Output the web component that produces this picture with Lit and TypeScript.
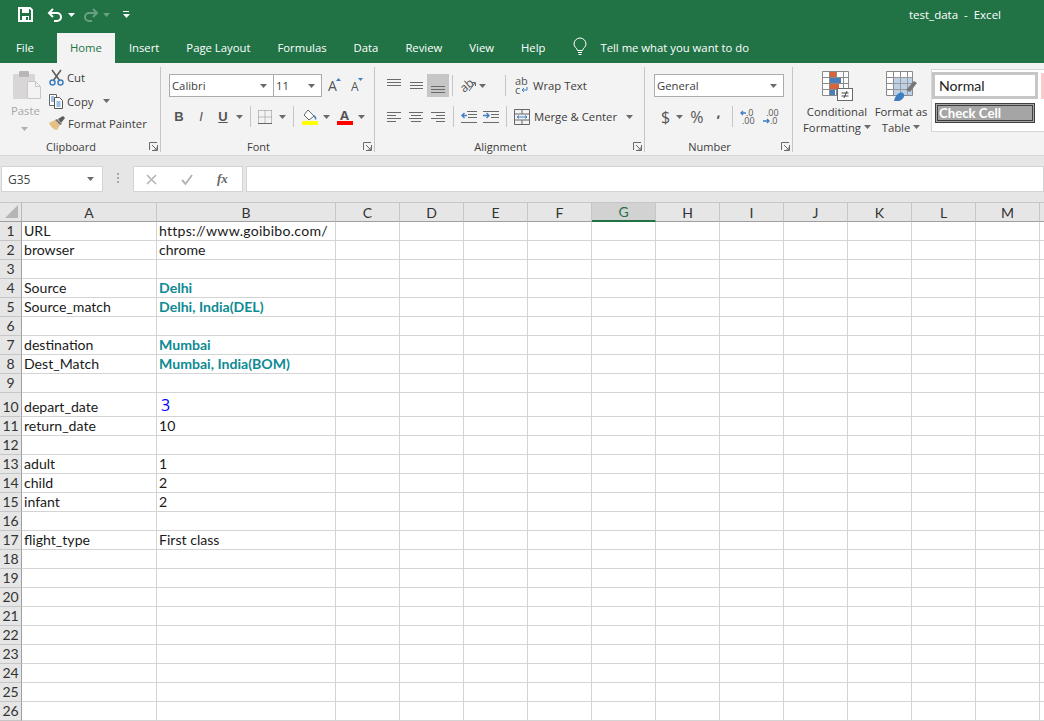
import { LitElement, html, css, svg } from "lit";
import { customElement } from "lit/decorators.js";

const ic = (w: number, h: number, body: unknown, cls = "") =>
  html`<svg class="ic ${cls}" width=${w} height=${h} viewBox="0 0 ${w} ${h}">${body}</svg>`;
const caret = (c = "#6a6a6a") => html`<svg class="ic" width="7" height="4" viewBox="0 0 7 4"><path d="M0 0h7L3.5 4z" fill=${c}/></svg>`;
const launcher = html`<svg class="ic launcher" width="9" height="9" viewBox="0 0 9 9"><path d="M.5 8V.5H8M8.5 3v5.5H3M3 3l4.5 4.5M5 8h3V5" fill="none" stroke="#6a6a6a"/></svg>`;

const lines = (rows: [number, number, number][], c = "#6a6a6a") =>
  rows.map(([x, y, w]) => svg`<rect x=${x} y=${y} width=${w} height="1" fill=${c}/>`);

const save = ic(15, 15, svg`<path d="M1 1h11l2 2v11H1z" fill="none" stroke="#fff" stroke-width="2"/><rect x="4" y="1" width="7" height="5" fill="#fff"/><rect x="4" y="9" width="7" height="5" fill="#fff"/><rect x="8" y="10" width="2" height="3" fill="#217346"/>`);
const undo = (c: string, flip = false) => ic(16, 14, svg`<g transform=${flip ? "translate(16 0) scale(-1 1)" : ""}><path d="M2 5h8a4 4 0 0 1 0 8H7" fill="none" stroke=${c} stroke-width="2"/><path d="M6 1L2 5l4 4" fill="none" stroke=${c} stroke-width="2"/></g>`);
const bulb = ic(14, 18, svg`<path d="M4.5 12.5C4 10 1 9 1 6a6 6 0 0 1 12 0c0 3-3 4-3.5 6.5z" fill="none" stroke="#fff"/><path d="M5 14.5h4M5.5 16.5h3" stroke="#fff"/>`);

const paste = ic(28, 30, svg`<rect x="0" y="3" width="22" height="25" rx="1" fill="#d9d6d7"/><rect x="6" y="0" width="10" height="6" rx="1" fill="#b9b6b7"/><path d="M14.5 10.5h8l5 5v12h-13z" fill="#f4f2f3" stroke="#c8c6c7"/><path d="M22.5 10.5v5h5" fill="none" stroke="#c8c6c7"/>`);
const scissors = ic(15, 17, svg`<path d="M3 1l8 11M12 1L4 12" stroke="#5d5d5d" stroke-width="1.6"/><circle cx="3.5" cy="13.5" r="2.5" fill="none" stroke="#3f7fc1" stroke-width="1.5"/><circle cx="11.5" cy="13.5" r="2.5" fill="none" stroke="#3f7fc1" stroke-width="1.5"/>`);
const copy = ic(15, 15, svg`<path d="M.5.5h7v11h-7z" fill="#fff" stroke="#666"/><path d="M5.5 3.5h5l3 3v8h-8z" fill="#fff" stroke="#555"/><path d="M2 3h3M2 5h3M2 7h3M7.5 8h4M7.5 10h4M7.5 12h4" stroke="#3f7fc1"/>`);
const painter = ic(16, 14, svg`<path d="M0 7l6-3 5 5-3 5C5 14 2 11 0 7z" fill="#e5c184"/><path d="M6 4l2-1 5 5-2 1z" fill="#777"/><path d="M9 3l5-3 2 2-4 5z" fill="#5b5b5b"/>`);
const growA = ic(16, 15, svg`<text x="0" y="13" class="glyph" font-size="14">A</text><path d="M8 3l2.5-3L13 3z" fill="#3f7fc1"/>`);
const shrinkA = ic(13, 15, svg`<text x="0" y="13" class="glyph" font-size="12">A</text><path d="M7 0h5L9.5 3z" fill="#3f7fc1"/>`);
const borders = ic(14, 14, svg`<path d="M.5.5h13M.5 7h13M.5.5v13M7 .5v13M13.5.5v13" fill="none" stroke="#8a8a8a" stroke-dasharray="1 1"/><path d="M0 13.5h14" stroke="#666"/>`);
const fill = ic(16, 16, svg`<path d="M6 1l6 6-5 4-5-5z" fill="#fff" stroke="#666"/><path d="M12 6c2 1 3 3 2 5-1-1-2-2-2-5z" fill="#3f7fc1"/><rect x="0" y="12" width="16" height="4" fill="#ffff00"/>`);
const fontA = ic(16, 16, svg`<text x="3" y="11" class="glyph" font-size="13" font-weight="700">A</text><rect x="0" y="12" width="16" height="4" fill="#ff0000"/>`);

const al = (rows: [number, number, number][]) => ic(14, 14, lines(rows));
const alTop = al([[0, 0, 14], [0, 3, 14], [0, 6, 14]]);
const alMid = al([[1, 3, 13], [1, 6, 13], [1, 9, 13]]);
const alBot = al([[0, 7, 14], [0, 10, 14], [0, 13, 14]]);
const alLeft = al([[0, 2, 14], [0, 5, 9], [0, 8, 14], [0, 11, 9]]);
const alCen = al([[0, 2, 14], [2, 5, 10], [0, 8, 14], [2, 11, 10]]);
const alRight = al([[0, 2, 14], [5, 5, 9], [0, 8, 14], [5, 11, 9]]);
const orient = ic(17, 15, svg`<text x="0" y="12" class="glyph" font-size="12" transform="rotate(-40 6 8)">ab</text><path d="M9 13l6-8M12 4.5h3.5V8" fill="none" stroke="#666"/>`);
const indL = ic(16, 14, svg`${lines([[6, 1, 10], [7, 4, 9], [7, 7, 9], [0, 12, 16]])}<path d="M6 5.5H1M3.5 3L1 5.5 3.5 8" fill="none" stroke="#3f7fc1" stroke-width="1.4"/>`);
const indR = ic(16, 14, svg`${lines([[0, 1, 16], [8, 4, 8], [8, 7, 8], [0, 12, 16]])}<path d="M0 5.5h6M3.5 3L6 5.5 3.5 8" fill="none" stroke="#3f7fc1" stroke-width="1.4"/>`);
const wrap = ic(13, 17, svg`<text x="0" y="8" class="glyph" font-size="11">ab</text><text x="0" y="17" class="glyph" font-size="11">c</text><path d="M12 10v3H7M9 11l-2 2 2 2" fill="none" stroke="#3f7fc1"/>`);
const merge = ic(16, 16, svg`<path d="M.5.5h15v15H.5zM.5 5h15M.5 11h15M8 .5V5M8 11v4.5" fill="none" stroke="#666"/><path d="M3 8h10M5 6.5L3 8l2 1.5M11 6.5L13 8l-2 1.5" fill="none" stroke="#3f7fc1"/>`);
const incDec = ic(15, 15, svg`<text x="6" y="7" class="glyph" font-size="9">.0</text><text x="2" y="15" class="glyph" font-size="9">.00</text><path d="M6 4H1M3 2L1 4l2 2" fill="none" stroke="#3f7fc1" stroke-width="1.3"/>`);
const decDec = ic(15, 15, svg`<text x="3" y="7" class="glyph" font-size="9">.00</text><text x="7" y="15" class="glyph" font-size="9">.0</text><path d="M0 12h6M4 10l2 2-2 2" fill="none" stroke="#3f7fc1" stroke-width="1.3"/>`);

const tableGrid = svg`<path d="M.5.5h26v24H.5zM.5 6.5h26M.5 12.5h26M.5 18.5h26M7.5.5v24M14.5.5v24M21.5.5v24" fill="#fff" stroke="#8a8a8a"/>`;
const condFmt = ic(31, 30, svg`${tableGrid}<rect x="8" y="1" width="6" height="5" fill="#d9643a"/><rect x="8" y="7" width="11" height="5" fill="#4a7ebb"/><rect x="8" y="13" width="9" height="5" fill="#d9643a"/><rect x="8" y="19" width="5" height="5" fill="#4a7ebb"/><rect x="15.5" y="17.5" width="15" height="12" fill="#fff" stroke="#6a6a6a"/><path d="M19.5 22h7M19.5 25h7M25 20l-3 7" stroke="#444" fill="none"/>`);
const fmtTable = ic(31, 30, svg`${tableGrid}<rect x="8" y="7" width="18" height="17" fill="#bcd0e6"/><path d="M7.5 6.5h19M7.5 12.5h19M7.5 18.5h19M14.5 6.5v18M21.5 6.5v18" stroke="#9a9a9a" fill="none"/><path d="M20 19l8-9 3 2-7 9z" fill="#777"/><path d="M8 30c1-5 5-10 9-8 3 2 0 7-4 8z" fill="#3f7fc1"/>`);

const COLS = [
  ["A", 135], ["B", 179], ["C", 64], ["D", 64], ["E", 64], ["F", 64], ["G", 64],
  ["H", 64], ["I", 64], ["J", 64], ["K", 64], ["L", 64], ["M", 64], ["", 64],
] as const;

type Cell = [string, string?, string?];
const DATA: Record<number, Cell> = {
  1: ["URL", "https://www.goibibo.com/", "url"],
  2: ["browser", "chrome"],
  4: ["Source", "Delhi", "teal"],
  5: ["Source_match", "Delhi, India(DEL)", "teal"],
  7: ["destination", "Mumbai", "teal"],
  8: ["Dest_Match", "Mumbai, India(BOM)", "teal"],
  10: ["depart_date", "3", "blue"],
  11: ["return_date", "10"],
  13: ["adult", "1"],
  14: ["child", "2"],
  15: ["infant", "2"],
  17: ["flight_type", "First class"],
};

@customElement("app-root")
export class AppRoot extends LitElement {
  static styles = css`
    :host { display: block; width: 1044px; height: 721px; overflow: hidden; background: #fff;
      font-family: "Open Sans", "Liberation Sans", sans-serif; font-size: 11.3px; color: #333; }
    .ic { display: block; flex: none; overflow: visible; }
    .glyph { font-family: "Open Sans", sans-serif; fill: #555; }

    .titlebar { height: 33px; background: #217346; display: flex; align-items: center; color: #fff; box-sizing: border-box; padding: 0 0 4px 18px; }
    .qat { display: flex; align-items: center; }
    .undo { margin-left: 14px; }
    .c1 { margin-left: 5px; }
    .redo { margin-left: 8px; opacity: .32; }
    .c2 { margin-left: 4px; opacity: .32; }
    .cust { margin-left: 13px; display: flex; flex-direction: column; gap: 2px; }
    .cust i { display: block; width: 6px; height: 1px; background: #fff; }
    .title { margin-left: auto; margin-right: 43px; white-space: pre; font-size: 11.5px; }

    .tabs { height: 30px; background: #217346; display: flex; color: #fff; }
    .tab { display: flex; align-items: center; padding-bottom: 2px; box-sizing: border-box; }
    .tab.file { margin-left: 16px; margin-right: 23px; }
    .tab.home { width: 58px; justify-content: center; background: #f3f3f3; color: #217346; margin-right: 14px; }
    .tab.g { margin-right: 27px; }
    .tell { display: flex; align-items: center; gap: 13px; margin-left: 1px; }

    .ribbon { height: 92px; background: #f3f3f3; border-bottom: 1px solid #d6d6d6; display: flex; color: #3c3c3c; }
    .group { position: relative; box-sizing: border-box; display: flex; flex-direction: column; height: 85px; margin-top: 4px; border-right: 1px solid #c6c6c6; flex: none; }
    .gbody { flex: 1; display: flex; min-height: 0; }
    .glabel { height: 10px; line-height: 10px; padding-right: 18px; text-align: center; font-size: 11px; position: relative; }
    .launcher { position: absolute; right: 2px; top: 0; }

    .clip { width: 161px; }
    .pastecol { width: 49px; padding: 4px 0 0 13px; box-sizing: border-box; color: #a8a8a8; }
    .pastecol .lbl { margin: 2px 0 0 -2px; }
    .pastecol .ic:last-child { margin: 9px 0 0 8px; }
    .cliprows { padding-top: 1px; display: flex; flex-direction: column; gap: 6px; }
    .crow { display: flex; align-items: center; height: 18px; gap: 3px; white-space: nowrap; }
    .crow.last { margin-top: -2px; }
    .crow .c { margin-left: 7px; }

    .font { width: 214px; }
    .font .gbody { padding-left: 8px; }
    .stack { display: flex; flex-direction: column; gap: 8px; padding-top: 7px; }
    .row { display: flex; align-items: center; height: 23px; }
    .combo { height: 23px; box-sizing: border-box; background: #fff; border: 1px solid #ababab; display: flex; align-items: center; justify-content: space-between; padding: 0 6px 0 2px; }
    .bi { font-family: "Liberation Sans", sans-serif; font-size: 13px; color: #555; width: 14px; text-align: center; }
    .vs { width: 1px; height: 21px; background: #c6c6c6; flex: none; }

    .align { width: 270px; }
    .align .gbody { padding-left: 12px; }
    .hl { width: 22px; height: 23px; background: #c6c6c6; display: flex; align-items: center; justify-content: center; margin-left: 4px; }
    .alsm { white-space: nowrap; }

    .num { width: 148px; }
    .num .gbody { padding-left: 9px; }
    .big { font-size: 16px; color: #555; }
    .comma { font-weight: 700; font-size: 14px; color: #555; transform: translateY(-5px); }

    .styles { flex: 1; display: flex; margin-top: 4px; height: 85px; }
    .cmd { display: flex; flex-direction: column; align-items: center; flex: none; padding-top: 4px; line-height: 16px; white-space: nowrap; }
    .cmd .ic:first-child { margin-bottom: 3px; }
    .cmd span { display: flex; align-items: center; gap: 3px; }
    .gallery { background: #fff; width: 120px; height: 63px; box-sizing: border-box; margin: 2px 0 0 5px; border: 1px solid #d6d6d6; padding: 2px 0 0 0; flex: none; display: flex; flex-direction: column; gap: 4px; position: relative; overflow: hidden; }
    .normal { width: 106px; height: 27px; box-sizing: border-box; border: 3px solid #c6c6c6; background: #fff; color: #222; display: flex; align-items: center; padding-left: 4px; font-family: "Lato", sans-serif; font-size: 14.1px; }
    .pink { position: absolute; left: 109px; top: 3px; width: 10px; height: 26px; background: #ffc7ce; }
    .check { width: 100px; height: 20px; box-sizing: border-box; margin-left: 3px; background: #a5a5a5; border: 3px double #3f3f3f; color: #fff; font-family: "Lato", sans-serif; font-weight: 700; font-size: 13.2px; display: flex; align-items: center; padding-left: 1px; }

    .fbar { height: 46px; background: #e6e6e6; box-sizing: border-box; padding: 10px 0 0 1px; display: flex; align-items: flex-start; }
    .box { height: 26px; background: #fff; border: 1px solid #d4d4d4; box-sizing: border-box; display: flex; align-items: center; }
    .name { width: 102px; padding: 0 8px 0 6px; justify-content: space-between; font-size: 12px; color: #444; }
    .dots { width: 30px; display: flex; flex-direction: column; align-items: center; gap: 2px; padding-top: 7px; }
    .dots i { width: 2px; height: 2px; background: #a8a8a8; }
    .fxbox { width: 110px; justify-content: flex-start; gap: 24px; padding-left: 12px; }
    .fx { font-family: "Liberation Serif", serif; font-style: italic; font-weight: 700; font-size: 13px; color: #666; }
    .input { flex: 1; margin-left: 3px; }

    .sheet { display: grid; font-family: "Lato", sans-serif; font-size: 14.1px; color: #1a1a1a; }
    .corner { background: #e6e6e6; border-bottom: 1px solid #9f9f9f; border-right: 1px solid #b9b9b9; box-sizing: border-box; position: relative; border-top: 1px solid #c6c6c6; }
    .corner svg { position: absolute; right: 3px; bottom: 3px; }
    .ch { background: #e6e6e6; border-top: 1px solid #c6c6c6; border-bottom: 1px solid #9f9f9f; border-right: 1px solid #c6c6c6; box-sizing: border-box; display: flex; align-items: center; justify-content: center; color: #333; font-size: 14px; }
    .ch.sel { background: #d2d2d2; border-bottom: 2px solid #217346; color: #217346; }
    .rh { background: #e6e6e6; border-bottom: 1px solid #c6c6c6; border-right: 1px solid #9f9f9f; box-sizing: border-box; display: flex; align-items: flex-end; justify-content: center; line-height: 18px; color: #333; font-size: 14px; }
    .cell { border-right: 1px solid #d4d4d4; border-bottom: 1px solid #d4d4d4; box-sizing: border-box; display: flex; align-items: flex-end; padding-left: 2px; line-height: 18px; white-space: nowrap; min-width: 0; }
    .teal { color: #0e8a92; font-weight: 700; }
    .url { letter-spacing: .25px; }
    .blue { color: #0000ff; font-size: 16px; padding-left: 2px; line-height: 22px; font-family: "Open Sans", sans-serif; }
  `;

  private sheet() {
    const rows: number[] = [];
    for (let r = 1; r <= 27; r++) rows.push(r === 10 ? 24 : 19);
    const cells = [];
    for (let r = 1; r <= 27; r++) {
      const d = DATA[r];
      cells.push(html`<div class="rh">${r <= 26 ? r : ""}</div>`);
      COLS.forEach((_, i) => {
        const text = d && i < 2 ? d[i] : "";
        const cls = d && i === 1 ? d[2] ?? "" : "";
        cells.push(html`<div class="cell"><span class=${cls}>${text}</span></div>`);
      });
    }
    return html`<div class="sheet" style="grid-template-columns:22px ${COLS.map((c) => c[1] + "px").join(" ")};grid-template-rows:20px ${rows.map((h) => h + "px").join(" ")}">
      <div class="corner"><svg width="13" height="13" viewBox="0 0 13 13"><path d="M13 0v13H0z" fill="#b5b5b5"/></svg></div>
      ${COLS.map((c) => html`<div class="ch ${c[0] === "G" ? "sel" : ""}">${c[0]}</div>`)}
      ${cells}
    </div>`;
  }

  render() {
    return html`
      <div class="titlebar">
        <div class="qat">
          ${save}
          <div class="undo">${undo("#fff")}</div><div class="c1">${caret("#fff")}</div>
          <div class="redo">${undo("#fff", true)}</div><div class="c2">${caret("#fff")}</div>
          <div class="cust"><i></i>${caret("#fff")}</div>
        </div>
        <div class="title">test_data  -  Excel</div>
      </div>
      <div class="tabs">
        <div class="tab file">File</div>
        <div class="tab home">Home</div>
        ${["Insert", "Page Layout", "Formulas", "Data", "Review", "View", "Help"].map((t) => html`<div class="tab g">${t}</div>`)}
        <div class="tab tell">${bulb}<span>Tell me what you want to do</span></div>
      </div>

      <div class="ribbon">
        <div class="group clip">
          <div class="gbody">
            <div class="pastecol">${paste}<div class="lbl">Paste</div>${caret("#b0b0b0")}</div>
            <div class="cliprows">
              <div class="crow">${scissors}<span>Cut</span></div>
              <div class="crow">${copy}<span>Copy</span><span class="c">${caret()}</span></div>
              <div class="crow last">${painter}<span>Format Painter</span></div>
            </div>
          </div>
          <div class="glabel">Clipboard${launcher}</div>
        </div>

        <div class="group font">
          <div class="gbody">
            <div class="stack">
              <div class="row">
                <div class="combo" style="width:105px"><span>Calibri</span>${caret()}</div>
                <div class="combo" style="width:49px;margin-left:-1px"><span>11</span>${caret()}</div>
                <div style="margin-left:6px">${growA}</div>
                <div style="margin-left:7px">${shrinkA}</div>
              </div>
              <div class="row">
                <span class="bi" style="margin-left:3px;font-weight:700">B</span>
                <span class="bi" style="margin-left:8px;font-style:italic">I</span>
                <span class="bi" style="margin-left:8px;text-decoration:underline;font-weight:700">U</span>
                <span style="margin-left:6px">${caret()}</span>
                <span class="vs" style="margin-left:7px"></span>
                <span style="margin-left:7px">${borders}</span>
                <span style="margin-left:7px">${caret()}</span>
                <span class="vs" style="margin-left:7px"></span>
                <span style="margin-left:8px">${fill}</span>
                <span style="margin-left:5px">${caret()}</span>
                <span style="margin-left:7px">${fontA}</span>
                <span style="margin-left:5px">${caret()}</span>
              </div>
            </div>
          </div>
          <div class="glabel">Font${launcher}</div>
        </div>

        <div class="group align">
          <div class="gbody">
            <div class="stack">
              <div class="row">
                ${alTop}<span style="margin-left:8px">${alMid}</span>
                <span class="hl">${alBot}</span>
                <span class="vs" style="margin-left:3px"></span>
                <span style="margin-left:7px">${orient}</span>
                <span style="margin-left:2px">${caret()}</span>
                <span class="vs" style="margin-left:19px"></span>
                <span style="margin-left:9px">${wrap}</span>
                <span class="alsm" style="margin-left:5px">Wrap Text</span>
              </div>
              <div class="row">
                ${alLeft}<span style="margin-left:8px">${alCen}</span>
                <span style="margin-left:8px">${alRight}</span>
                <span class="vs" style="margin-left:8px"></span>
                <span style="margin-left:7px">${indL}</span>
                <span style="margin-left:6px">${indR}</span>
                <span class="vs" style="margin-left:7px"></span>
                <span style="margin-left:7px">${merge}</span>
                <span class="alsm" style="margin-left:4px">Merge &amp; Center</span>
                <span style="margin-left:9px">${caret()}</span>
              </div>
            </div>
          </div>
          <div class="glabel">Alignment${launcher}</div>
        </div>

        <div class="group num">
          <div class="gbody">
            <div class="stack">
              <div class="row"><div class="combo" style="width:130px"><span>General</span>${caret()}</div></div>
              <div class="row">
                <span class="big" style="margin-left:7px">$</span>
                <span style="margin-left:6px">${caret()}</span>
                <span class="big" style="margin-left:7px">%</span>
                <span class="comma" style="margin-left:13px">,</span>
                <span class="vs" style="margin-left:12px"></span>
                <span style="margin-left:7px">${incDec}</span>
                <span style="margin-left:8px">${decDec}</span>
              </div>
            </div>
          </div>
          <div class="glabel">Number${launcher}</div>
        </div>

        <div class="styles">
          <div class="cmd" style="width:80px;margin-left:4px">${condFmt}<div>Conditional</div><span>Formatting ${caret()}</span></div>
          <div class="cmd" style="width:50px;margin-left:-1px">${fmtTable}<div>Format as</div><span>Table ${caret()}</span></div>
          <div class="gallery">
            <div class="normal">Normal</div>
            <div class="pink"></div>
            <div class="check">Check Cell</div>
          </div>
        </div>
      </div>

      <div class="fbar">
        <div class="box name"><span>G35</span>${caret()}</div>
        <div class="dots"><i></i><i></i><i></i></div>
        <div class="box fxbox">
          ${ic(11, 11, svg`<path d="M1 1l9 9M10 1l-9 9" stroke="#b5b5b5" stroke-width="1.6"/>`)}
          ${ic(12, 11, svg`<path d="M1 6l3.5 4L11 1" fill="none" stroke="#b5b5b5" stroke-width="2"/>`)}
          <span class="fx">fx</span>
        </div>
        <div class="box input"></div>
      </div>
      ${this.sheet()}
    `;
  }
}
